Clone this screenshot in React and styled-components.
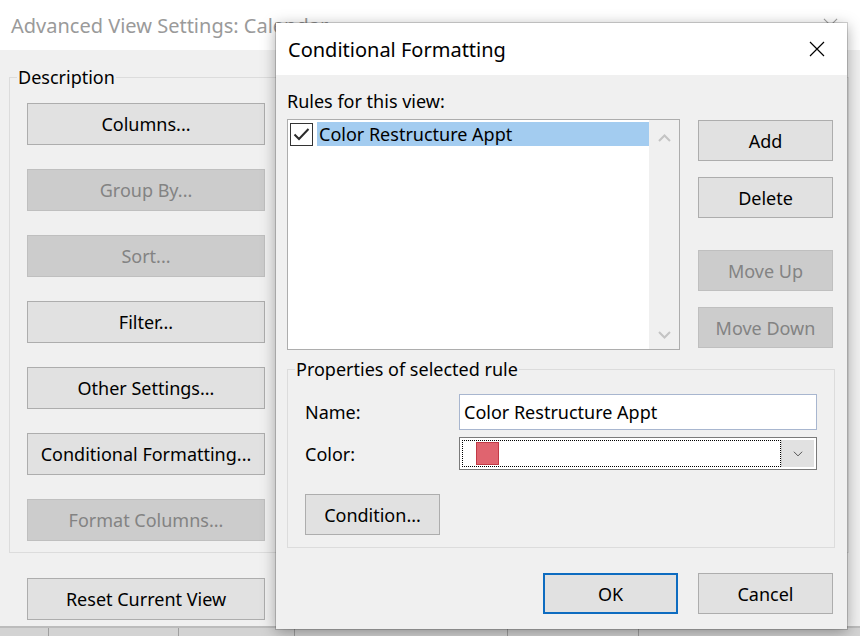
import React from 'react';
import styled, { createGlobalStyle, css } from 'styled-components';

const GlobalStyle = createGlobalStyle`
  html, body {
    margin: 0;
    padding: 0;
  }

  body {
    width: 860px;
    height: 636px;
    overflow: hidden;
    background: #f0f0f0;
    font-family: "Noto Sans", "Open Sans", sans-serif;
    color: #000;
  }
`;

const Desktop = styled.div`
  position: relative;
  width: 860px;
  height: 636px;
  overflow: hidden;
`;

/* window behind: Advanced View Settings */
const BackWindow = styled.div`
  display: flex;
  flex-direction: column;
  height: 100%;
`;

const BackTitleBar = styled.div`
  height: 50px;
  flex: none;
  display: flex;
  align-items: center;
  justify-content: space-between;
  padding: 0 22px 0 11px;
  background: #fff;
  color: #9a9a9a;
  font-size: 20px;
`;

const BackBody = styled.div`
  flex: 1;
  display: flex;
  flex-direction: column;
  align-items: flex-start;
  padding: 15px 0 0 9px;
  background: #f0f0f0;
`;

const GroupBox = styled.fieldset`
  margin: ${(p) => p.$mt || 0}px 0 0;
  box-sizing: border-box;
  width: ${(p) => p.$width}px;
  border: 1px solid #dcdcdc;
  padding: ${(p) => p.$pad};
  min-width: 0;
`;

const GroupLabel = styled.legend`
  margin-left: -10px;
  padding: 0 1px;
  font-size: 18px;
  line-height: 24px;
  color: #000;
`;

const ButtonStack = styled.div`
  display: flex;
  flex-direction: column;
  gap: 24px;
`;

const WinButton = styled.div`
  box-sizing: border-box;
  display: flex;
  align-items: center;
  justify-content: center;
  width: ${(p) => p.$w || 135}px;
  height: ${(p) => p.$h || 41}px;
  margin-top: ${(p) => p.$mt || 0}px;
  border: 1px solid #adadad;
  background: #e1e1e1;
  color: #000;
  font-size: 18px;
  white-space: nowrap;

  ${(p) =>
    p.$off &&
    css`
      background: #cccccc;
      border-color: #bfbfbf;
      color: #838383;
    `}

  ${(p) =>
    p.$default &&
    css`
      border: 2px solid #0e6cc0;
    `}
`;

const ResetRow = styled.div`
  margin: 25px 0 0 18px;
`;

const BottomStrip = styled.div`
  height: 8px;
  flex: none;
  display: flex;
  border-top: 2px solid #bcbcbc;
  background: #d3d3d3;
`;

const StripCell = styled.div`
  width: ${(p) => p.$w}px;
  border-right: 1px solid #9f9f9f;
`;

/* front dialog: Conditional Formatting */
const Dialog = styled.div`
  position: absolute;
  left: 276px;
  top: 23px;
  width: 571px;
  height: 606px;
  display: flex;
  flex-direction: column;
  background: #f0f0f0;
  box-shadow: 0 0 0 1px rgba(0, 0, 0, 0.16), 0 3px 14px rgba(0, 0, 0, 0.35);
`;

const DialogTitle = styled.div`
  height: 52px;
  flex: none;
  display: flex;
  align-items: center;
  justify-content: space-between;
  padding: 0 22px 0 12px;
  background: #fff;
  font-size: 20px;
`;

const DialogBody = styled.div`
  flex: 1;
  display: flex;
  flex-direction: column;
  padding: 14px 14px 15px 11px;
`;

const FieldLabel = styled.div`
  font-size: 18px;
  line-height: 24px;
  margin-bottom: ${(p) => p.$mb || 0}px;
`;

const RulesRow = styled.div`
  display: flex;
  align-items: flex-start;
  gap: 18px;
`;

const ListBox = styled.div`
  box-sizing: border-box;
  width: 393px;
  height: 231px;
  display: flex;
  border: 1px solid #adadad;
  background: #fff;
`;

const ListItems = styled.div`
  flex: 1;
  padding: 2px 0 0 2px;
`;

const ListItem = styled.div`
  display: flex;
  align-items: center;
  gap: 4px;
`;

const CheckBox = styled.div`
  box-sizing: border-box;
  width: 23px;
  height: 23px;
  border: 1px solid #333;
  background: #fff;
  display: flex;
  align-items: center;
  justify-content: center;
`;

const ItemText = styled.div`
  flex: 1;
  height: 24px;
  line-height: 24px;
  padding-left: 2px;
  background: ${(p) => (p.$selected ? '#a3ccf0' : 'transparent')};
  font-size: 18px;
`;

const ScrollBar = styled.div`
  width: 30px;
  display: flex;
  flex-direction: column;
  align-items: center;
  justify-content: space-between;
  padding: 14px 0 10px;
  background: #f0f0f0;
`;

const SideButtons = styled.div`
  display: flex;
  flex-direction: column;
  gap: 16px;
  padding-top: 1px;
`;

const PropGrid = styled.div`
  display: grid;
  grid-template-columns: 154px 358px;
  row-gap: 7px;
  align-items: center;
`;

const TextInput = styled.div`
  box-sizing: border-box;
  height: 36px;
  display: flex;
  align-items: center;
  padding-left: 4px;
  border: 1px solid #a8b6cf;
  background: #fff;
  font-size: 18px;
`;

const Combo = styled.div`
  box-sizing: border-box;
  height: 33px;
  display: flex;
  padding: 2px;
  border: 1px solid #7a7a7a;
  background: #fff;
`;

const ComboValue = styled.div`
  flex: 1;
  display: flex;
  align-items: center;
  padding-left: 13px;
  border: 1px dotted #000;
`;

const Swatch = styled.div`
  box-sizing: border-box;
  width: 23px;
  height: 23px;
  background: ${(p) => p.$color};
  border: 1px solid #c23a46;
`;

const ComboArrow = styled.div`
  width: 32px;
  display: flex;
  align-items: center;
  justify-content: center;
  background: #e1e1e1;
  border-left: 1px solid #cdcdcd;
`;

const ConditionRow = styled.div`
  margin-top: 24px;
`;

const Footer = styled.div`
  margin-top: auto;
  display: flex;
  justify-content: flex-end;
  gap: 20px;
`;

const CloseIcon = ({ color = '#000', size = 16 }) => (
  <svg width={size} height={size} viewBox="0 0 16 16">
    <path d="M1 1 L15 15 M15 1 L1 15" stroke={color} strokeWidth="1.2" fill="none" />
  </svg>
);

const Chevron = ({ up, color, w = 13, h = 8, sw = 2 }) => (
  <svg width={w} height={h} viewBox="0 0 13 8">
    <polyline
      points={up ? '1,7 6.5,1.5 12,7' : '1,1 6.5,6.5 12,1'}
      stroke={color}
      strokeWidth={sw}
      fill="none"
    />
  </svg>
);

const leftButtons = [
  { label: 'Columns...' },
  { label: 'Group By...', off: true },
  { label: 'Sort...', off: true },
  { label: 'Filter...' },
  { label: 'Other Settings...' },
  { label: 'Conditional Formatting...' },
  { label: 'Format Columns...', off: true },
];

const App = () => (
  <>
    <GlobalStyle />
    <Desktop>
      <BackWindow>
        <BackTitleBar>
          <span>Advanced View Settings: Calendar</span>
          <CloseIcon color="#a0a0a0" size={15} />
        </BackTitleBar>
        <BackBody>
          <GroupBox $width={840} $pad="14px 0 11px 17px">
            <GroupLabel>Description</GroupLabel>
            <ButtonStack>
              {leftButtons.map((b) => (
                <WinButton key={b.label} $w={238} $h={42} $off={b.off}>
                  {b.label}
                </WinButton>
              ))}
            </ButtonStack>
          </GroupBox>
          <ResetRow>
            <WinButton $w={238} $h={42}>
              Reset Current View
            </WinButton>
          </ResetRow>
        </BackBody>
        <BottomStrip>
          <StripCell $w={48} />
          <StripCell $w={129} />
          <StripCell $w={115} />
          <StripCell $w={212} />
          <StripCell $w={130} />
        </BottomStrip>
      </BackWindow>

      <Dialog>
        <DialogTitle>
          <span>Conditional Formatting</span>
          <CloseIcon />
        </DialogTitle>
        <DialogBody>
          <FieldLabel $mb={6}>Rules for this view:</FieldLabel>
          <RulesRow>
            <ListBox>
              <ListItems>
                <ListItem>
                  <CheckBox>
                    <svg width="17" height="15" viewBox="0 0 17 15">
                      <polyline points="1.5,7.5 6,12 15.5,2" stroke="#2b2b2b" strokeWidth="2" fill="none" />
                    </svg>
                  </CheckBox>
                  <ItemText $selected>Color Restructure Appt</ItemText>
                </ListItem>
              </ListItems>
              <ScrollBar>
                <Chevron up color="#c4c4c4" />
                <Chevron color="#c4c4c4" />
              </ScrollBar>
            </ListBox>
            <SideButtons>
              <WinButton>Add</WinButton>
              <WinButton>Delete</WinButton>
              <WinButton $off $mt={16}>Move Up</WinButton>
              <WinButton $off>Move Down</WinButton>
            </SideButtons>
          </RulesRow>

          <GroupBox $mt={7} $width={548} $pad="13px 16px 12px 17px">
            <GroupLabel>Properties of selected rule</GroupLabel>
            <PropGrid>
              <FieldLabel>Name:</FieldLabel>
              <TextInput>Color Restructure Appt</TextInput>
              <FieldLabel>Color:</FieldLabel>
              <Combo>
                <ComboValue>
                  <Swatch $color="#e0646f" />
                </ComboValue>
                <ComboArrow>
                  <Chevron color="#444" w={10} h={6} sw={1.2} />
                </ComboArrow>
              </Combo>
            </PropGrid>
            <ConditionRow>
              <WinButton>Condition...</WinButton>
            </ConditionRow>
          </GroupBox>

          <Footer>
            <WinButton $default>OK</WinButton>
            <WinButton>Cancel</WinButton>
          </Footer>
        </DialogBody>
      </Dialog>
    </Desktop>
  </>
);

export default App;
